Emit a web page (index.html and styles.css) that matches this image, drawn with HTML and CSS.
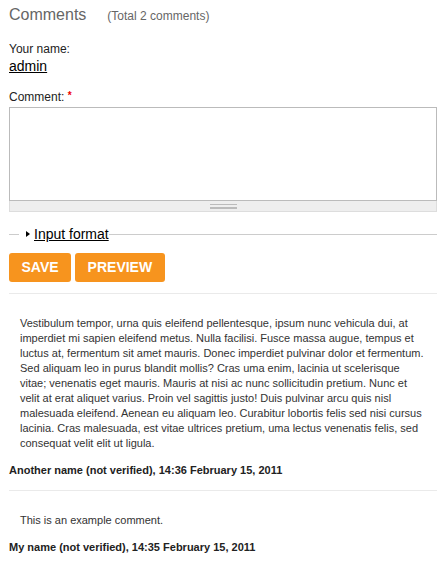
FILE: index.html
```html
<!DOCTYPE html>
<html>
<head>
<meta charset="utf-8">
<link rel="stylesheet" href="styles.css">
</head>
<body>
<div class="page">
  <h2 class="title">Comments<span class="total">(Total 2 comments)</span></h2>
  <div class="field">
    <div class="label">Your name:</div>
    <a class="username" href="#">admin</a>
  </div>
  <div class="field field-comment">
    <div class="label">Comment: <span class="req">*</span></div>
    <div class="resizable">
      <textarea class="textarea"></textarea>
      <div class="grippie"><span class="grip"></span></div>
    </div>
  </div>
  <div class="fieldset">
    <span class="fs-line fs-short"></span>
    <span class="legend"><span class="tri"></span><a class="legend-link" href="#">Input format</a></span>
    <span class="fs-line fs-long"></span>
  </div>
  <div class="actions">
    <button class="btn">SAVE</button>
    <button class="btn">PREVIEW</button>
  </div>
  <div class="comment">
    <p class="comment-body">Vestibulum tempor, urna quis eleifend pellentesque, ipsum nunc vehicula dui, at imperdiet mi sapien eleifend metus. Nulla facilisi. Fusce massa augue, tempus et luctus at, fermentum sit amet mauris. Donec imperdiet pulvinar dolor et fermentum. Sed aliquam leo in purus blandit mollis? Cras uma enim, lacinia ut scelerisque vitae; venenatis eget mauris. Mauris at nisi ac nunc sollicitudin pretium. Nunc et velit at erat aliquet varius. Proin vel sagittis justo! Duis pulvinar arcu quis nisl malesuada eleifend. Aenean eu aliquam leo. Curabitur lobortis felis sed nisi cursus lacinia. Cras malesuada, est vitae ultrices pretium, uma lectus venenatis felis, sed consequat velit elit ut ligula.</p>
    <div class="meta">Another name (not verified), 14:36 February 15, 2011</div>
  </div>
  <div class="comment">
    <p class="comment-body">This is an example comment.</p>
    <div class="meta">My name (not verified), 14:35 February 15, 2011</div>
  </div>
</div>
</body>
</html>
```
FILE: styles.css
```css
html, body {
  margin: 0;
  padding: 0;
  background: #fff;
}
body {
  font-family: "Liberation Sans", Arial, sans-serif;
  color: #222;
}
.page {
  padding: 5px 11px 0 9px;
}
.title {
  margin: 0;
  font-size: 16px;
  line-height: 20px;
  font-weight: normal;
  color: #666;
}
.total {
  font-size: 12px;
  margin-left: 21px;
  color: #666;
}
.field {
  margin-top: 16px;
}
.field-comment {
  margin-top: 15px;
}
.label {
  font-size: 12px;
  line-height: 15px;
  height: 15px;
  color: #222;
}
.req {
  color: #e00;
  font-weight: bold;
  font-size: 10px;
  line-height: 0;
  vertical-align: 2px;
}
.username {
  display: block;
  margin-top: 1px;
  font-size: 14px;
  line-height: 17px;
  color: #000;
  text-decoration: underline;
}
.resizable {
  margin-top: 2px;
}
.textarea {
  display: block;
  box-sizing: border-box;
  width: 100%;
  height: 94px;
  margin: 0;
  border: 1px solid #bbb;
  resize: none;
  background: #fff;
}
.grippie {
  box-sizing: border-box;
  height: 11px;
  background: #eee;
  border: 1px solid #ddd;
  border-top: 0;
  display: flex;
  justify-content: center;
  align-items: center;
}
.grip {
  display: block;
  width: 27px;
  height: 5px;
  border-top: 1px solid #bbb;
  border-bottom: 1px solid #bbb;
  background: linear-gradient(#eee 0 1px, #bbb 1px 2px, #eee 2px);
  background-size: 100% 100%;
  box-sizing: border-box;
  background-position: 0 1px;
  background-repeat: no-repeat;
}
.fieldset {
  margin-top: 13px;
  height: 18px;
  display: flex;
  align-items: center;
}
.fs-line {
  height: 1px;
  background: #ccc;
}
.fs-short {
  width: 10px;
}
.fs-long {
  flex: 1;
}
.legend {
  display: flex;
  align-items: center;
  padding-left: 7px;
}
.tri {
  width: 0;
  height: 0;
  border-left: 4px solid #000;
  border-top: 3px solid transparent;
  border-bottom: 3px solid transparent;
  margin-right: 4px;
}
.legend-link {
  font-size: 14px;
  line-height: 18px;
  color: #000;
  text-decoration: underline;
}
.actions {
  margin-top: 10px;
  display: flex;
  gap: 4px;
  padding-bottom: 11px;
  border-bottom: 1px solid #eaeaea;
}
.btn {
  height: 29px;
  padding: 0 12.5px;
  border: 0;
  border-radius: 3px;
  background: #f7941e;
  color: #fff;
  font-family: "Liberation Sans", Arial, sans-serif;
  font-weight: bold;
  font-size: 14px;
  line-height: 29px;
}
.comment {
  padding-top: 22px;
}
.comment + .comment {
  border-top: 1px solid #eaeaea;
}
.comment-body {
  margin: 0 11px;
  font-size: 11px;
  line-height: 15px;
  color: #333;
}
.meta {
  margin-top: 12px;
  font-size: 11px;
  line-height: 15px;
  font-weight: bold;
  color: #222;
  padding-bottom: 12px;
}
```
